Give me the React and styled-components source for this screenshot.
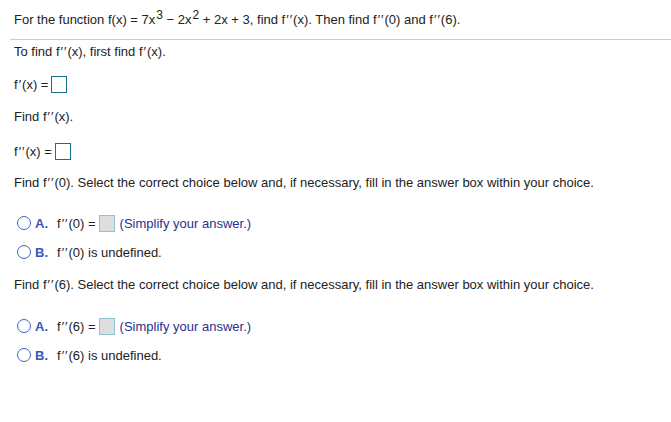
import React from 'react'
import styled, { createGlobalStyle } from 'styled-components'

const GlobalStyle = createGlobalStyle`
  html, body {
    margin: 0;
    padding: 0;
    background: #ffffff;
  }
  body {
    font-family: "Liberation Sans", Arial, sans-serif;
    font-size: 13px;
    color: #222222;
  }
`;

const Page = styled.div`
  width: 671px;
  height: 422px;
  overflow: hidden;
`;

const Header = styled.div`
  padding: 12px 14px 11px 4px;
  margin-left: 10px;
  line-height: 16px;
  border-bottom: 1px solid #c9cdd6;
`;

const Sup = styled.sup`
  font-size: 12px;
  line-height: 0;
  vertical-align: 5px;
  margin-left: 1px;
`;

const Prime = styled.span`
  display: inline-block;
  margin: 0 0 0 1px;
  letter-spacing: 1px;
`;

const Body = styled.div`
  padding-left: 14px;
`;

const Line = styled.div`
  line-height: 16px;
  margin-top: ${p => p.$gap}px;
`;

const Row = styled.div`
  display: flex;
  align-items: center;
  height: 16px;
  margin-top: ${p => p.$gap}px;
`;

const AnswerBox = styled.span`
  display: inline-block;
  box-sizing: border-box;
  width: 16px;
  height: 17px;
  margin-left: 3px;
  border: 1.5px solid #1a6f8f;
  background: #ffffff;
`;

const Choice = styled.div`
  display: flex;
  align-items: center;
  height: 16px;
  margin-left: 3px;
  margin-top: ${p => p.$gap}px;
`;

const Radio = styled.span`
  flex: 0 0 auto;
  box-sizing: border-box;
  width: 14px;
  height: 14px;
  border-radius: 50%;
  border: 1.5px solid #3b66c2;
  margin-right: 4px;
`;

const Letter = styled.span`
  display: inline-block;
  font-weight: bold;
  color: #3658b8;
  margin-right: 9px;
`;

const GreyBox = styled.span`
  flex: 0 0 auto;
  box-sizing: border-box;
  width: 16px;
  height: 17px;
  margin: 0 5px 0 3px;
  border: 1px solid #8fc3d2;
  background: #dedede;
`;

const Hint = styled.span`
  color: #2b2f8f;
`;

const P1 = () => <Prime>{'\u2032'}</Prime>
const P2 = () => <Prime>{'\u2032\u2032'}</Prime>

function App() {
  return (
    <Page>
      <GlobalStyle />
      <Header>
        For the function f(x) = 7x<Sup>3</Sup> {'\u2212'} 2x<Sup>2</Sup> + 2x + 3, find f<P2 />(x). Then find f<P2 />(0) and f<P2 />(6).
      </Header>
      <Body>
        <Line $gap={4}>To find f<P2 />(x), first find f<P1 />(x).</Line>
        <Row $gap={16}>f<P1 />(x) =<AnswerBox /></Row>
        <Line $gap={17}>Find f<P2 />(x).</Line>
        <Row $gap={18}>f<P2 />(x) =<AnswerBox /></Row>
        <Line $gap={16}>Find f<P2 />(0). Select the correct choice below and, if necessary, fill in the answer box within your choice.</Line>
        <Choice $gap={24}>
          <Radio /><Letter>A.</Letter>f<P2 />(0) =<GreyBox /><Hint>(Simplify your answer.)</Hint>
        </Choice>
        <Choice $gap={13}>
          <Radio /><Letter>B.</Letter>f<P2 />(0) is undefined.
        </Choice>
        <Line $gap={17}>Find f<P2 />(6). Select the correct choice below and, if necessary, fill in the answer box within your choice.</Line>
        <Choice $gap={25}>
          <Radio /><Letter>A.</Letter>f<P2 />(6) =<GreyBox /><Hint>(Simplify your answer.)</Hint>
        </Choice>
        <Choice $gap={13}>
          <Radio /><Letter>B.</Letter>f<P2 />(6) is undefined.
        </Choice>
      </Body>
    </Page>
  )
}

export default App
